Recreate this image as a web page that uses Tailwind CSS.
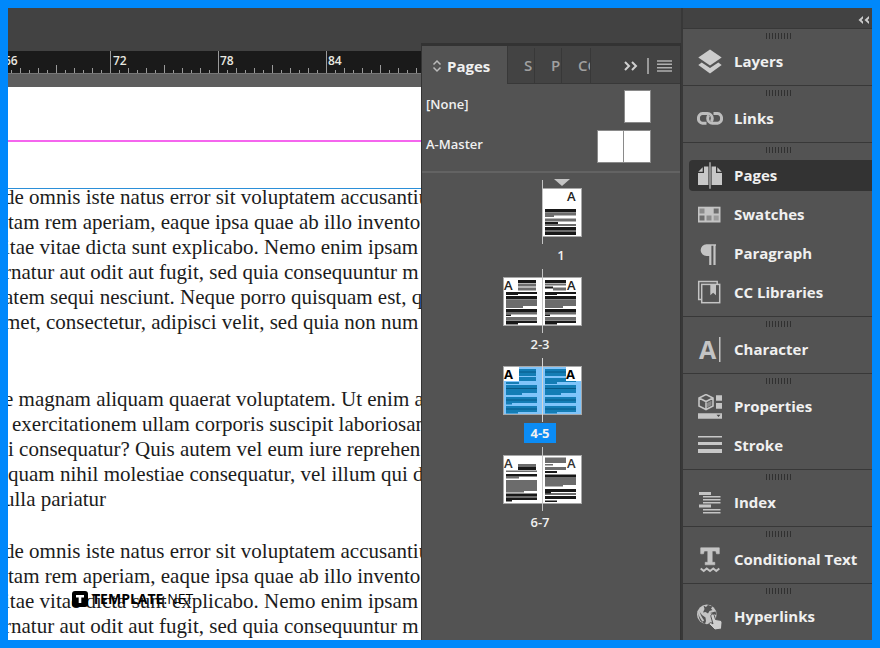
<!DOCTYPE html>
<html lang="en">
<head>
<meta charset="utf-8">
<title>Pages panel</title>
<script src="https://cdn.jsdelivr.net/npm/@tailwindcss/browser@4"></script>
</head>
<body class="h-screen overflow-hidden bg-[#0088fb] p-2 font-['Open_Sans',sans-serif] text-[#f0f0f0]">
<div class="flex h-full bg-[#424242]">

  <!-- Workspace -->
  <main class="flex min-w-0 flex-1 flex-col">
    <div class="h-[35px] shrink-0"></div>
    <div class="flex min-h-0 flex-1">

      <section aria-label="Document" class="relative flex min-w-0 flex-1 flex-col overflow-hidden pt-2">
        <svg class="h-[23px] w-full shrink-0 bg-[#1a1a1a]" aria-label="Ruler">
          <defs>
            <pattern id="ticks" x="102" y="0" width="108" height="23" patternUnits="userSpaceOnUse">
              <path d="M.5 0V22M54.5 14V22M18.5 17V22M36.5 17V22M72.5 17V22M90.5 17V22M9.5 19V22M27.5 19V22M45.5 19V22M63.5 19V22M81.5 19V22M99.5 19V22" stroke="#9a9a9a"/>
            </pattern>
          </defs>
          <rect width="100%" height="23" fill="url(#ticks)"/>
          <rect y="22" width="100%" height="1" fill="#777"/>
          <g fill="#e8e8e0" font-size="12" font-weight="600">
            <text x="-4" y="14">66</text><text x="105" y="14">72</text><text x="212" y="14">78</text><text x="320" y="14">84</text>
          </g>
        </svg>
        <div class="h-[13px] shrink-0 bg-[#5e5e5e]"></div>
        <article class="min-h-0 flex-1 overflow-hidden whitespace-nowrap bg-white font-['Liberation_Serif',serif] text-[21px] leading-[25px] text-[#1c1c1c]">
          <div class="h-[55px] border-b-2 border-[#f566ee]"></div>
          <div class="h-[47px] border-b border-[#2b8fd8]"></div>
          <p class="-mt-1 -ml-1">
            <span class="block">de omnis iste natus error sit voluptatem accusantiu</span>
            <span class="block pl-1">tam rem aperiam, eaque ipsa quae ab illo invento</span>
            <span class="block">itae vitae dicta sunt explicabo. Nemo enim ipsam</span>
            <span class="block">rnatur aut odit aut fugit, sed quia consequuntur m</span>
            <span class="block">atem sequi nesciunt. Neque porro quisquam est, q</span>
            <span class="block">met, consectetur, adipisci velit, sed quia non num</span>
          </p>
          <p class="mt-[52px] -ml-1">
            <span class="block">e magnam aliquam quaerat voluptatem. Ut enim a</span>
            <span class="block pl-2">exercitationem ullam corporis suscipit laboriosan</span>
            <span class="block pl-1">i consequatur? Quis autem vel eum iure reprehen</span>
            <span class="block pl-1">quam nihil molestiae consequatur, vel illum qui d</span>
            <span class="block">ulla pariatur</span>
          </p>
          <p class="mt-[27px] -ml-1">
            <span class="block">de omnis iste natus error sit voluptatem accusantiu</span>
            <span class="block pl-1">tam rem aperiam, eaque ipsa quae ab illo invento</span>
            <span class="block">itae vitae dicta sunt explicabo. Nemo enim ipsam</span>
            <span class="block">rnatur aut odit aut fugit, sed quia consequuntur m</span>
          </p>
        </article>
        <div class="absolute bottom-[33px] left-16 flex items-center gap-1 text-[14px] leading-4 text-black">
          <svg class="size-4" viewBox="0 0 16 16"><rect width="16" height="16" rx="3"/><path d="M4 4h8v2.500H9.300V12H6.700V6.500H4z" fill="#fff"/></svg>
          <span><b>TEMPLATE</b>.NET</span>
        </div>
      </section>

      <!-- Pages panel -->
      <section aria-label="Pages" class="flex w-[260px] shrink-0 flex-col border-x border-t-[3px] border-[#333] bg-[#535353]">
        <div class="flex h-[38px] shrink-0 items-stretch text-[15px]" role="tablist">
          <button role="tab" aria-selected="true" class="flex w-[85px] items-center gap-1 pt-0.5 pl-[9px] font-bold">
            <svg class="h-4 w-3" viewBox="0 0 12 16" fill="none" stroke="#bbb" stroke-width="1.500"><path d="M2.500 6.500 6 3l3.500 3.500M2.500 9.500 6 13l3.500-3.500"/></svg>Pages</button>
          <div class="flex min-w-0 flex-1 items-stretch border-b border-l border-[#383838] bg-[#434343] pt-0.5 font-semibold text-[#a0a0a0]">
            <button role="tab" class="w-[27px] overflow-hidden border-r border-[#383838] pl-4 text-left">S</button>
            <button role="tab" class="w-[27px] overflow-hidden border-r border-[#383838] pl-4 text-left">P</button>
            <button role="tab" class="w-[29px] overflow-hidden border-r border-[#383838] pl-4 text-left">CC</button>
            <div class="flex flex-1 items-center justify-end gap-2 pr-[7px]">
              <button aria-label="More tabs"><svg class="h-4 w-4" viewBox="0 0 16 16" fill="none" stroke="#d0d0d0" stroke-width="2"><path d="m2 4 4 4-4 4M9 4l4 4-4 4"/></svg></button>
              <span class="h-4 w-0.5 bg-[#999]"></span>
              <button aria-label="Panel menu"><svg class="h-4 w-4" viewBox="0 0 16 16" stroke="#b0b0b0" stroke-width="1.500"><path d="M0 3h15M0 6.300h15M0 9.700h15M0 13h15"/></svg></button>
            </div>
          </div>
        </div>
        <div class="flex shrink-0 flex-col gap-[7px] border-b-2 border-[#636363] pt-[6px] pr-[29px] pb-2 pl-1 text-[13px] font-semibold">
          <div class="flex h-[33px] items-center justify-between"><span class="pb-1">[None]</span><span class="h-[33px] w-[27px] border border-[#8a8a8a] bg-white"></span></div>
          <div class="flex h-[33px] items-center justify-between"><span class="pb-1">A-Master</span><span class="flex h-[33px] w-[54px] border border-[#8a8a8a] bg-white"><span class="w-1/2 border-r border-[#8a8a8a]"></span></span></div>
        </div>
        <div class="flex flex-1 flex-col items-center pt-[6px] pr-4 text-[13px] font-semibold leading-5">

          <div class="h-[89px] text-center">
            <svg class="h-[66px] w-20" viewBox="0 0 80 66" font-size="13" font-weight="600">
              <path d="M51 0h16l-8 7z" fill="#c4c4c4"/>
              <rect x="39.500" y="9.500" width="39" height="48" fill="#fff" stroke="#a8a8a8"/>
              <path d="M39.500 1v64" stroke="#c4c4c4"/>
              <text x="64" y="22" fill="#222">A</text>
              <path d="M42 34h31v2.500H42zM42 36.500h9V38h-9zM42 39.500h31v3H42zM42 45h31v2H42zM42 51h31v2H42z" fill="#6c6c6c"/>
              <path d="M42 30h31v3.500H42zM42 43h13v2H42zM42 48h31v3H42zM42 53h31v3H42z" fill="#181818"/>
            </svg>
            <div class="pl-9">1</div>
          </div>

          <div class="h-[89px] text-center">
            <svg class="h-[66px] w-20" viewBox="0 0 80 66" font-size="13" font-weight="600">
              <rect x=".5" y="9.500" width="78" height="48" fill="#fff" stroke="#a8a8a8"/>
              <path d="M15 15.500h18v3H15zM15 19.500h18v3H15zM3 32h31v6H3zM3 38h17v2H3zM3 44h31v2.500H3zM3 49h31v3H3zM42 15.500h21v2H42zM50 19.500h13v3H50zM42 32h31v6H42zM42 38h18v2H42zM42 44h31v2.500H42zM42 49h31v3H42z" fill="#6c6c6c"/>
              <path d="M15 12h18v3H15zM3 24h31v2H3zM3 26h12v1H3zM3 28h31v3.500H3zM3 41h31v3H3zM3 46.500h5V48H3zM3 52.500h31v2.500H3zM3 55h12v1.500H3zM42 12h21v3H42zM42 18.500h8v2h-8zM42 24h31v2H42zM42 26h12v1H42zM42 28h31v3.500H42zM42 41h31v3H42zM42 46.500h5V48h-5zM42 52.500h31v2.500H42zM42 55h12v1.500H42z" fill="#181818"/>
              <path d="M39.500 1v64" stroke="#c4c4c4"/>
              <text x="1" y="22" fill="#222">A</text><text x="64" y="22" fill="#222">A</text>
            </svg>
            <div class="pr-1.5">2-3</div>
          </div>

          <div class="h-[89px] text-center">
            <svg class="h-[66px] w-20" viewBox="0 0 80 66" font-size="13" font-weight="700">
              <rect x=".5" y="9.500" width="78" height="48" fill="#80c4fa" stroke="#a8a8a8"/>
              <path d="M15 12h18v7H15zM15 20h18v4H15zM3 25h13v2H3zM3 28h31v8H3zM3 36h16v2H3zM3 40h31v6H3zM3 46h6v1.500H3zM3 49h31v6H3zM3 55h12v1.500H3zM42 12h21v7H42zM42 21h31v4H42zM42 25h12v2H42zM42 28h31v8H42zM42 36h16v2H42zM42 40h31v6H42zM42 49h31v6H42zM42 55h12v1.500H42z" fill="#147db5"/>
              <path d="M15 15h18M3 31.500h31M3 43h31M3 52h31M42 15h21M42 31.500h31M42 43h31M42 52h31" stroke="#075a88"/>
              <path d="M1 10h15v14H1zM63 10h15v14H63z" fill="#fff"/>
              <path d="M39.500 1v64" stroke="#d4d4d4"/>
              <text x="1" y="22" fill="#000">A</text><text x="63" y="22" fill="#000">A</text>
            </svg>
            <div class="pr-1.5"><span class="inline-block w-8 bg-[#0b8cf5] font-bold">4-5</span></div>
          </div>

          <div class="h-[89px] text-center">
            <svg class="h-[66px] w-20" viewBox="0 0 80 66" font-size="13" font-weight="600">
              <rect x=".5" y="9.500" width="78" height="48" fill="#fff" stroke="#a8a8a8"/>
              <path d="M15 18h18v3H15zM3 24.500h31V26H3zM3 30.500h13v2H3zM3 34h31v11H3zM3 45h18v1.500H3zM3 50h31v2H3zM42 11.500h21V17H42zM42 18h8v1.500h-8zM42 21h21v3H42zM42 31h31v2H42zM42 33h31v6H42zM42 39h18v1.500H42zM42 47h31v2H42z" fill="#6c6c6c"/>
              <path d="M15 21h18v3H15zM3 28h31v2.500H3zM3 47.500h31v2.500H3zM3 52h31v2H3zM3 54h6v1.500H3zM42 25h12v2H42zM42 28.500h31V31H42zM42 43h31v3H42zM42 46h6v1.500h-6zM42 50h31v3H42zM42 54.500h12V56H42z" fill="#181818"/>
              <path d="M39.500 1v64" stroke="#c4c4c4"/>
              <text x="1" y="22" fill="#333">A</text><text x="64" y="22" fill="#333">A</text>
            </svg>
            <div class="pr-1.5">6-7</div>
          </div>
        </div>
      </section>
    </div>
  </main>

  <!-- Panel dock -->
  <svg class="hidden"><defs><symbol id="grip" viewBox="0 0 27 6"><path d="M.5 0v6M3.500 0v6M6.500 0v6M9.500 0v6M12.500 0v6M15.500 0v6M18.500 0v6M21.500 0v6M24.500 0v6" stroke="#303030"/></symbol></defs></svg>
  <nav aria-label="Panels" class="flex w-[191px] shrink-0 flex-col overflow-hidden border-l-2 border-[#383838] bg-[#535353] text-[15px] font-bold">
    <div class="flex h-5 shrink-0 items-center justify-end bg-[#424242] pt-1 pr-0.5">
      <button aria-label="Collapse"><svg class="h-3 w-3" viewBox="0 0 12 12" fill="#ccc"><path d="M5 2v2.500L3.500 6 5 7.500V10L.5 6zM11 2v2.500L9.500 6 11 7.500V10L6.500 6z"/></svg></button>
    </div>

    <div class="relative shrink-0 border-t border-[#383838] pt-[13px] pb-1">
      <svg class="absolute top-1 left-[83px] h-1.5 w-[27px]"><use href="#grip"/></svg>
      <button class="flex h-[39px] w-full items-center gap-[11px] pl-[14px]">
        <svg class="size-[26px]" viewBox="0 0 26 26" fill="#ccc"><path d="M13 .5 24.700 8.500 13 16.500 1.300 8.500z"/><path d="M1.300 16 4.700 13.500 13 19l8.300-5.500L24.700 16 13 24.500z"/></svg>Layers</button>
    </div>

    <div class="relative shrink-0 border-t border-[#383838] pt-[13px] pb-1">
      <svg class="absolute top-1 left-[83px] h-1.5 w-[27px]"><use href="#grip"/></svg>
      <button class="flex h-[39px] w-full items-center gap-[11px] pl-[14px]">
        <svg class="size-[26px]" viewBox="0 0 26 26" fill="none" stroke="#bdbdbd" stroke-width="3"><path d="M9.500 17.200H5.500a4.300 4.300 0 0 1-4-4.800 4.300 4.300 0 0 1 4-4.800h5a4.800 4.800 0 0 1 4.800 4.800c0 1.300-.5 2.300-1.200 3"/><path d="M16.500 7.600h4a4.300 4.300 0 0 1 4 4.800 4.300 4.300 0 0 1-4 4.800h-5a4.800 4.800 0 0 1-4.800-4.800c0-1.300.5-2.300 1.200-3"/></svg>Links</button>
    </div>

    <div class="relative shrink-0 border-t border-[#383838] pt-[13px] pb-1">
      <svg class="absolute top-1 left-[83px] h-1.5 w-[27px]"><use href="#grip"/></svg>
      <div class="flex h-[39px] items-center pl-1.5">
        <button class="flex h-[31px] w-full items-center gap-[11px] rounded-l bg-[#333] pl-2">
          <svg class="size-[26px] overflow-visible" viewBox="0 0 26 26" fill="#c8c8c8"><path d="M7 3.500h4.400V22H1V10h6zM19 3.500h-4.400V22H25V10h-6zM1.300 8.700 5.700 4.300v4.400zM24.700 8.700 20.300 4.300v4.400z"/><path d="M12.400-.7h1.200v26.400h-1.200z"/></svg>Pages</button>
      </div>
      <button class="flex h-[39px] w-full items-center gap-[11px] pl-[14px]">
        <svg class="size-[26px]" viewBox="0 0 26 26"><path fill="#c4c4c4" d="M1 4.700h22.500v15.800H1z"/><path fill="#8c8c8c" d="M2.500 6.500h5v5h-5zM9.500 13.500h5v5h-5z"/><path fill="#6e6e6e" d="M16.700 6.500h5v5h-5zM2.500 13.500h5v5h-5z"/><path fill="#9c9c9c" d="M16.700 13.500h5v5h-5z"/></svg>Swatches</button>
      <button class="flex h-[39px] w-full items-center gap-[11px] pl-[14px]">
        <svg class="size-[26px]" viewBox="0 0 26 26" fill="#c4c4c4"><path d="M9.500 3.300H19v1.500h-.4V24h-2.200V4.800h-2V24h-2.200V15H9.500a5.850 5.850 0 0 1 0-11.700z"/></svg>Paragraph</button>
      <button class="flex h-[39px] w-full items-center gap-[11px] pl-[14px]">
        <svg class="size-[26px]" viewBox="0 0 26 26" fill="none" stroke="#c4c4c4" stroke-width="1.500"><path d="M4 19.500H1.700V1.500h18.500V4"/><rect x="4.700" y="4.400" width="18" height="18.300"/><path d="M13.300 4.500H19v10.800l-2.850-2.600-2.850 2.600z" fill="#c4c4c4" stroke="none"/></svg>CC Libraries</button>
    </div>

    <div class="relative shrink-0 border-t border-[#383838] pt-[13px] pb-1">
      <svg class="absolute top-1 left-[83px] h-1.5 w-[27px]"><use href="#grip"/></svg>
      <button class="flex h-[39px] w-full items-center gap-[11px] pl-[14px]">
        <svg class="size-[26px]" viewBox="0 0 26 26" fill="#c4c4c4"><text x="2" y="21.500" font-size="25" font-weight="700">A</text><path d="M22 0h1.500v25H22z"/></svg>Character</button>
    </div>

    <div class="relative shrink-0 border-t border-[#383838] pt-[13px] pb-1">
      <svg class="absolute top-1 left-[83px] h-1.5 w-[27px]"><use href="#grip"/></svg>
      <button class="flex h-[39px] w-full items-center gap-[11px] pl-[14px]">
        <svg class="size-[26px]" viewBox="0 0 26 26"><path d="M9 .5 16 4v8l-7 3.500L2 12V4zM2 4l7 3.500L16 4M9 7.500v8" fill="none" stroke="#c4c4c4" stroke-width="1.600"/><path d="m10 9 4.500-2.300v4.600L10 13.600z" fill="#888"/><path d="M19 1.300h6v5.500h-6zM19 9h6v5.700h-6zM1 19.300h24v5.400H1z" fill="#c4c4c4"/><path d="M19.500 20.800h4L21.500 23z" fill="#444"/></svg>Properties</button>
      <button class="flex h-[39px] w-full items-center gap-[11px] pl-[14px]">
        <svg class="size-[26px]" viewBox="0 0 26 26" fill="#c8c8c8"><path d="M1 3h24v1.500H1zM1 9h24v3H1zM1 16h24v4H1z"/></svg>Stroke</button>
    </div>

    <div class="relative shrink-0 border-t border-[#383838] pt-[13px] pb-1">
      <svg class="absolute top-1 left-[83px] h-1.5 w-[27px]"><use href="#grip"/></svg>
      <button class="flex h-[39px] w-full items-center gap-[11px] pl-[14px]">
        <svg class="size-[26px]" viewBox="0 0 26 26" fill="#c4c4c4"><path d="M2 2h12v3H2zM6 6h17.500v1.500H6zM6 9h17.500v1.500H6zM6 12h17.500v1.500H6zM2 14.500h12v3H2zM6 19h17.500v1.500H6zM6 22h17.500v1.500H6z"/></svg>Index</button>
    </div>

    <div class="relative shrink-0 border-t border-[#383838] pt-[13px] pb-1">
      <svg class="absolute top-1 left-[83px] h-1.5 w-[27px]"><use href="#grip"/></svg>
      <button class="flex h-[39px] w-full items-center gap-[11px] whitespace-nowrap pl-[14px]">
        <svg class="size-[26px] shrink-0" viewBox="0 0 26 26"><path d="M3.700.8h18.600v6h-2.800L18.800 4h-3.600v11.300h2.600v2.500H8.200v-2.500h2.600V4H7.200l-.7 2.800H3.700z" fill="#c4c4c4" stroke="#c4c4c4" stroke-width=".6"/><path d="m3.700 21.500 3 2.500 3-2.500 3.300 2.500 3.300-2.500 3 2.500 3-2.500" fill="none" stroke="#c4c4c4" stroke-width="2"/></svg>Conditional Text</button>
    </div>

    <div class="relative shrink-0 border-t border-[#383838] pt-[13px] pb-1">
      <svg class="absolute top-1 left-[83px] h-1.5 w-[27px]"><use href="#grip"/></svg>
      <button class="flex h-[39px] w-full items-center gap-[11px] pl-[14px]">
        <svg class="size-[26px]" viewBox="0 0 26 26"><circle cx="9.800" cy="10.400" r="9.800" fill="#c4c4c4"/><path d="M6.500 1.500 9 3l2-2 4.500 1.500-1.500 2 1.500 1.500-3 1-1.500 2.500L8.500 8 6 8.500 7.500 5zM2 7l3 4 3.500 2.500L9 17l-1 3-4.500-3C1.500 14 1 10 2 7zM13 9l5.500-1.500L19.500 11 16 10z" fill="#535353"/><path d="M1.500 7c1 4 2 7 5 10" stroke="#c4c4c4" stroke-width="2" fill="none"/><path d="M15 10.200c1.200-.5 2 .3 2.300 1.300l1.200 4 4.300.7c1.500.3 2.200 1.200 2.200 2.600l-.5 6.200-6.500 1-5.500-5.500c-.8-1.300.5-2.300 1.800-1.600l1.700 1-2.100-7.500c-.2-1 .2-1.900 1.100-2.200z" fill="#cfcfcf" stroke="#535353" stroke-width="1"/></svg>Hyperlinks</button>
    </div>
  </nav>
</div>
</body>
</html>
